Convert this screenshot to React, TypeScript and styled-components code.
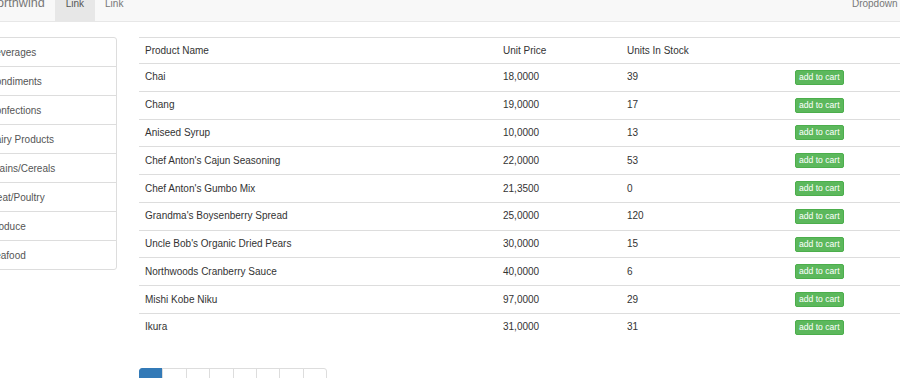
import React from "react";
import styled, { createGlobalStyle } from "styled-components";

const GlobalStyle = createGlobalStyle`
  html, body {
    margin: 0;
    padding: 0;
    overflow: hidden;
    background: #fff;
  }
  body {
    font-family: "Liberation Sans", Arial, Helvetica, sans-serif;
    font-size: 10px;
    color: #333;
  }
`;

const Page = styled.div`
  width: 946px;
  margin-left: -23px;
`;

const Navbar = styled.nav`
  display: flex;
  align-items: stretch;
  height: 35px;
  margin-top: -14px;
  background: #f8f8f8;
  border-bottom: 1px solid #e7e7e7;
`;

const Brand = styled.a`
  padding: 9px 10.5px 0 11px;
  font-size: 12.6px;
  line-height: 17px;
  color: #777;
  text-decoration: none;
`;

const NavItem = styled.a<{ $active?: boolean }>`
  padding: 10px 10.5px 0;
  line-height: 15px;
  color: ${(p) => (p.$active ? "#555" : "#777")};
  background: ${(p) => (p.$active ? "#e7e7e7" : "transparent")};
  text-decoration: none;
`;

const NavRight = styled.div`
  margin-left: auto;
  display: flex;
`;

const Caret = styled.span`
  display: inline-block;
  width: 0;
  height: 0;
  margin: 0 3px 0 6px;
  vertical-align: middle;
  border-top: 3px solid #777;
  border-left: 3px solid transparent;
  border-right: 3px solid transparent;
`;

const Main = styled.div`
  display: flex;
  align-items: flex-start;
  gap: 22px;
  margin-top: 15px;
`;

const Sidebar = styled.div`
  width: 140px;
  flex: 0 0 140px;
  display: flex;
  flex-direction: column;
`;

const CategoryItem = styled.a`
  display: block;
  padding: 7.5px 10.5px;
  line-height: 13px;
  color: #555;
  text-decoration: none;
  background: #fff;
  border: 1px solid #ddd;
  margin-bottom: -1px;
  &:first-child {
    border-radius: 3px 3px 0 0;
  }
  &:last-child {
    border-radius: 0 0 3px 3px;
    margin-bottom: 0;
  }
`;

const Content = styled.div`
  flex: 1;
`;

const Table = styled.table`
  width: 781px;
  table-layout: fixed;
  border-collapse: collapse;
  border-spacing: 0;
`;

const Th = styled.th<{ $w?: number }>`
  box-sizing: border-box;
  width: ${(p) => (p.$w ? `${p.$w}px` : "auto")};
  text-align: left;
  font-weight: normal;
  padding: 6px 6px;
  line-height: 13px;
  border-top: 1px solid #ddd;
  border-bottom: 1px solid #ddd;
`;

const Td = styled.td`
  padding: 5.9px 6px;
  line-height: 14px;
  border-top: 1px solid #ddd;
  vertical-align: middle;
  white-space: nowrap;
`;

const Row = styled.tr`
  &:first-child td {
    border-top: 0;
  }
`;

const CartButton = styled.button`
  display: block;
  font-family: inherit;
  font-size: 8.6px;
  line-height: 13px;
  padding: 0 3px;
  margin-left: -1px;
  color: #fff;
  background: #5cb85c;
  border: 1px solid #4cae4c;
  border-radius: 2px;
  cursor: pointer;
`;

const Pagination = styled.ul`
  display: flex;
  list-style: none;
  padding: 0;
  margin: 27px 0 0;
`;

const PageLink = styled.li<{ $active?: boolean }>`
  width: 22.4px;
  height: 24px;
  box-sizing: content-box;
  border: 1px solid ${(p) => (p.$active ? "#337ab7" : "#ddd")};
  margin-left: -1px;
  background: ${(p) => (p.$active ? "#337ab7" : "#fff")};
  color: ${(p) => (p.$active ? "#fff" : "#337ab7")};
  text-align: center;
  padding-top: 9px;
  line-height: 14px;
  &:first-child {
    margin-left: 0;
    border-radius: 3px 0 0 3px;
  }
  &:last-child {
    border-radius: 0 3px 3px 0;
  }
`;

const categories = [
  "Beverages",
  "Condiments",
  "Confections",
  "Dairy Products",
  "Grains/Cereals",
  "Meat/Poultry",
  "Produce",
  "Seafood",
];

const products = [
  { name: "Chai", price: "18,0000", stock: 39 },
  { name: "Chang", price: "19,0000", stock: 17 },
  { name: "Aniseed Syrup", price: "10,0000", stock: 13 },
  { name: "Chef Anton's Cajun Seasoning", price: "22,0000", stock: 53 },
  { name: "Chef Anton's Gumbo Mix", price: "21,3500", stock: 0 },
  { name: "Grandma's Boysenberry Spread", price: "25,0000", stock: 120 },
  { name: "Uncle Bob's Organic Dried Pears", price: "30,0000", stock: 15 },
  { name: "Northwoods Cranberry Sauce", price: "40,0000", stock: 6 },
  { name: "Mishi Kobe Niku", price: "97,0000", stock: 29 },
  { name: "Ikura", price: "31,0000", stock: 31 },
];

export default function App() {
  return (
    <Page>
      <GlobalStyle />
      <Navbar>
        <Brand href="#">Northwind</Brand>
        <NavItem href="#" $active>
          Link
        </NavItem>
        <NavItem href="#">Link</NavItem>
        <NavRight>
          <NavItem href="#">
            Dropdown
            <Caret />
          </NavItem>
        </NavRight>
      </Navbar>
      <Main>
        <Sidebar>
          {categories.map((c) => (
            <CategoryItem href="#" key={c}>
              {c}
            </CategoryItem>
          ))}
        </Sidebar>
        <Content>
          <Table>
            <thead>
              <tr>
                <Th $w={358}>Product Name</Th>
                <Th $w={124}>Unit Price</Th>
                <Th $w={169}>Units In Stock</Th>
                <Th></Th>
              </tr>
            </thead>
            <tbody>
              {products.map((p) => (
                <Row key={p.name}>
                  <Td>{p.name}</Td>
                  <Td>{p.price}</Td>
                  <Td>{p.stock}</Td>
                  <Td>
                    <CartButton>add to cart</CartButton>
                  </Td>
                </Row>
              ))}
            </tbody>
          </Table>
          <Pagination>
            {[1, 2, 3, 4, 5, 6, 7, 8].map((n) => (
              <PageLink key={n} $active={n === 1}>
                {n}
              </PageLink>
            ))}
          </Pagination>
        </Content>
      </Main>
    </Page>
  );
}
